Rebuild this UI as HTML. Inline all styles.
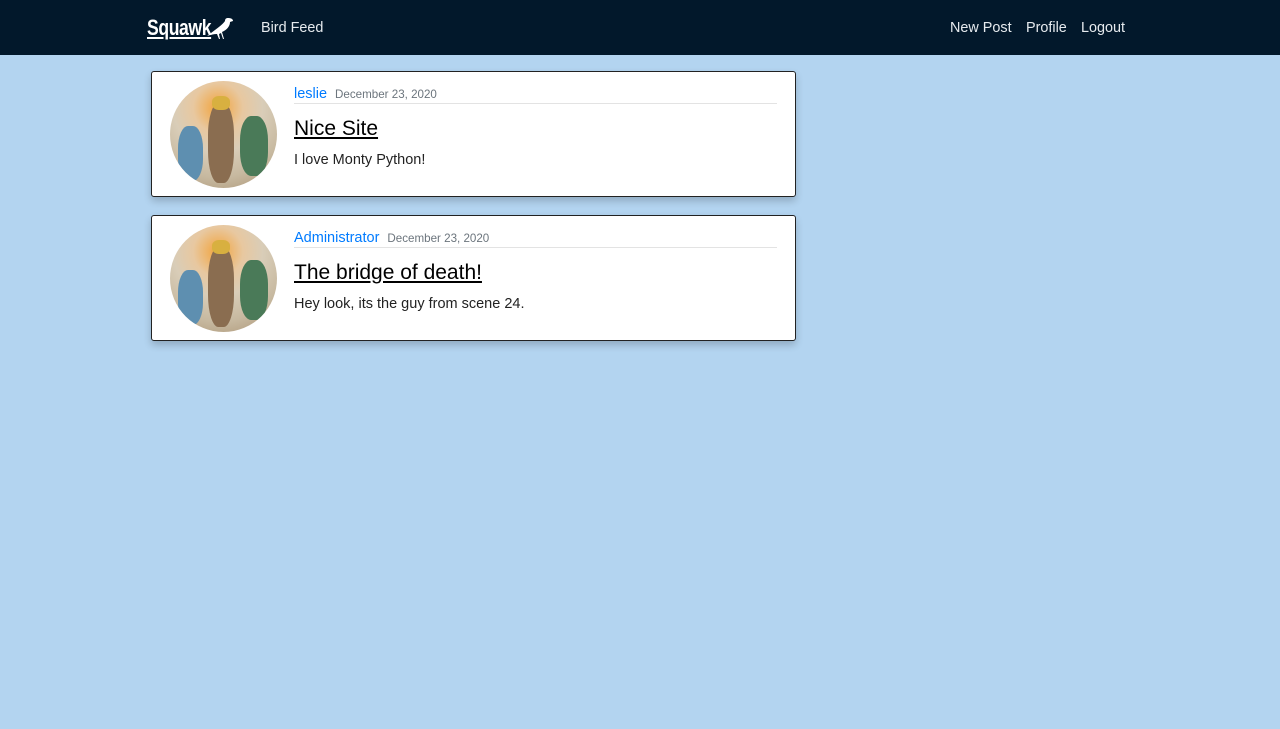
<!DOCTYPE html>
<html><head><meta charset="utf-8"><style>
body{margin:0;background:#b3d4f0;font-family:"Liberation Sans",sans-serif;width:1280px;height:729px;overflow:hidden}
nav{height:55px;background:#02182b;position:relative;color:#e8ecef}
.logo{position:absolute;left:147px;top:15px;font-family:"Liberation Sans Narrow","Liberation Sans",sans-serif;font-weight:bold;font-size:22px;color:#fff;text-decoration:underline;letter-spacing:-0.5px;transform:scaleX(0.8);transform-origin:left}
.bird{position:absolute;left:206px;top:16px}
.nl{position:absolute;top:20px;font-size:14.4px;color:#e6eaee}
.card{position:absolute;left:151px;width:643px;height:124px;background:#fff;border:1px solid #222;border-radius:3px;box-shadow:0 4px 8px rgba(0,0,0,.2)}
.av{position:absolute;left:18px;top:9px;width:107px;height:107px;border-radius:50%;overflow:hidden;background:radial-gradient(circle at 45% 25%,#f2a33a 0,#e8c8a0 25%,#d9cdb8 45%,#c7b9a0 70%,#a89070 100%)}
.av i{position:absolute;border-radius:40%}
.meta{position:absolute;left:142px;top:13px;right:18px;border-bottom:1px solid #e3e3e3;height:18px}
.user{color:#007bff;font-size:14.5px}
.date{color:#6c757d;font-size:11.6px;margin-left:8px}
.title{position:absolute;left:142px;top:45px;font-size:21px;color:#000;text-decoration:underline}
.body{position:absolute;left:142px;top:80px;font-size:14.5px;color:#222}
</style></head><body>
<nav>
<div class="logo">Squawk</div>
<svg class="bird" width="28" height="26" viewBox="0 0 28 26"><path d="M22 2c3 0 5 1 5 3l-3 1c0 4-3 8-8 10l2 7h-1l-2-6-2 1 1 5h-1l-2-5C8 18 4 19 1 20l8-6c4-3 8-6 10-9 0-2 1-3 3-3z" fill="#fff"/></svg>
<div class="nl" style="left:261px">Bird Feed</div>
<div class="nl" style="left:950px">New Post</div>
<div class="nl" style="left:1026px">Profile</div>
<div class="nl" style="left:1081px">Logout</div>
</nav>
<div class="card" style="top:71px">
<div class="av"><i style="left:38px;top:22px;width:26px;height:80px;background:#8a6d50"></i><i style="left:8px;top:45px;width:25px;height:55px;background:#5e8fb0"></i><i style="left:70px;top:35px;width:28px;height:60px;background:#4a7a58"></i><i style="left:42px;top:15px;width:18px;height:14px;background:#d8b040"></i></div>
<div class="meta"><span class="user">leslie</span><span class="date">December 23, 2020</span></div>
<div class="title">Nice Site</div>
<div class="body">I love Monty Python!</div>
</div>
<div class="card" style="top:215px">
<div class="av"><i style="left:38px;top:22px;width:26px;height:80px;background:#8a6d50"></i><i style="left:8px;top:45px;width:25px;height:55px;background:#5e8fb0"></i><i style="left:70px;top:35px;width:28px;height:60px;background:#4a7a58"></i><i style="left:42px;top:15px;width:18px;height:14px;background:#d8b040"></i></div>
<div class="meta"><span class="user">Administrator</span><span class="date">December 23, 2020</span></div>
<div class="title">The bridge of death!</div>
<div class="body">Hey look, its the guy from scene 24.</div>
</div>
</body></html>
